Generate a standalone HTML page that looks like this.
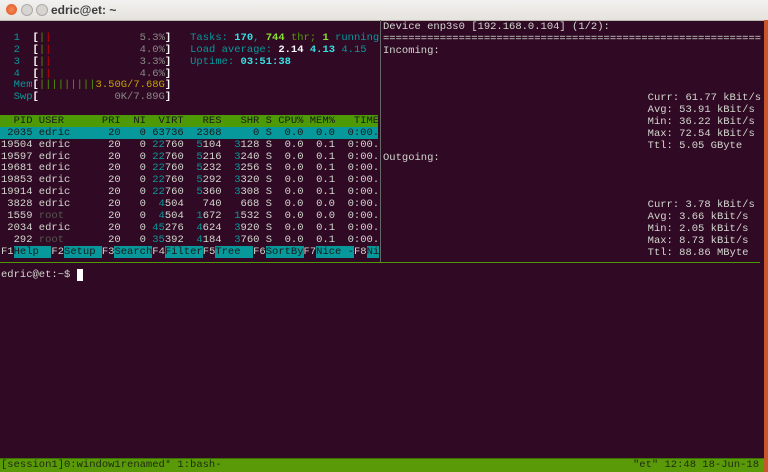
<!DOCTYPE html>
<html><head><meta charset="utf-8"><style>
*{margin:0;padding:0}
body{width:768px;height:472px;overflow:hidden;background:#300a24;position:relative;font-family:"Liberation Mono",monospace;font-size:10.5px;color:#d3d7cf}
.tb{position:absolute;left:0;top:0;width:768px;height:20px;background:linear-gradient(#f2f1ef,#e6e3de);border-bottom:1px solid #bdb8b0}
.tb .t{position:absolute;left:51px;top:3px;font-family:"Liberation Sans",sans-serif;font-weight:bold;font-size:12px;color:#3c3c3c}
.c{position:absolute;top:4px;width:11px;height:11px;border-radius:50%}
.l{position:absolute;white-space:pre;height:12px;line-height:12px}
.g{color:#888a85}.w{color:#fff;font-weight:bold}.tl{color:#06989a}.cy{color:#34e2e2;font-weight:bold}
.gr{color:#4e9a06}.grb{color:#8ae234;font-weight:bold}.r{color:#cc0000}.y{color:#c4a000}.dk{color:#555753}
.fk{background:#06989a;color:#1a1a1a}
</style></head><body>
<div class="tb"><div class="c" style="left:6px;background:radial-gradient(#f58a5a,#e0531f)"></div><div class="c" style="left:21px;background:#d8d5d0;border:1px solid #aaa;width:10px;height:10px"></div><div class="c" style="left:36px;background:#d8d5d0;border:1px solid #aaa;width:10px;height:10px"></div><div class="t">edric@et: ~</div></div>
<div style="position:absolute;left:764px;top:20px;width:4px;height:452px;background:#c9572e"></div>
<div style="position:absolute;left:380px;top:20px;width:1px;height:243px;background:#666"></div>
<div style="position:absolute;left:0;top:262px;width:760px;height:1px;background:#4e9a06"></div>
<div style="position:absolute;left:0;top:20px;width:381px;height:243px">
<div class="l" style="left:1px;top:12px">  <span class="tl">1</span>  <span class="w">[</span><span class="gr">|</span><span class="r">|</span><span class="g">              5.3%</span><span class="w">]</span>   <span class="tl">Tasks: </span><span class="cy">170</span><span class="tl">, </span><span class="grb">744</span><span class="gr"> thr; </span><span class="grb">1</span><span class="tl"> running</span></div>
<div class="l" style="left:1px;top:24px">  <span class="tl">2</span>  <span class="w">[</span><span class="gr">|</span><span class="r">|</span><span class="g">              4.0%</span><span class="w">]</span>   <span class="tl">Load average: </span><span class="w">2.14 </span><span class="cy">4.13 </span><span class="tl">4.15</span></div>
<div class="l" style="left:1px;top:35.5px">  <span class="tl">3</span>  <span class="w">[</span><span class="gr">|</span><span class="r">|</span><span class="g">              3.3%</span><span class="w">]</span>   <span class="tl">Uptime: </span><span class="cy">03:51:38</span></div>
<div class="l" style="left:1px;top:47.5px">  <span class="tl">4</span>  <span class="w">[</span><span class="gr">|</span><span class="r">|</span><span class="g">              4.6%</span><span class="w">]</span></div>
<div class="l" style="left:1px;top:59.3px">  <span class="tl">Mem</span><span class="w">[</span><span class="gr">|||||||||</span><span class="y">3.50G/7.68G</span><span class="w">]</span></div>
<div class="l" style="left:1px;top:71.2px">  <span class="tl">Swp</span><span class="w">[</span><span class="g">            0K/7.89G</span><span class="w">]</span></div>
<div class="l" style="left:0;top:95px;width:377px;padding-left:1px;background:#4e9a06;color:#1a1a1a">  PID USER      PRI  NI  VIRT   RES   SHR S CPU% MEM%   TIME</div>
<div class="l" style="left:0;top:106.8px;width:377px;padding-left:1px;background:#06989a;color:#1a1a1a"> 2035 edric      20   0 63736  2368     0 S  0.0  0.0  0:00.</div>
<div class="l" style="left:1px;top:118.7px">19504 edric      20   0 <span class="tl">22</span>760  <span class="tl">5</span>104  <span class="tl">3</span>128 S  0.0  0.1  0:00.</div>
<div class="l" style="left:1px;top:130.6px">19597 edric      20   0 <span class="tl">22</span>760  <span class="tl">5</span>216  <span class="tl">3</span>240 S  0.0  0.1  0:00.</div>
<div class="l" style="left:1px;top:142.4px">19681 edric      20   0 <span class="tl">22</span>760  <span class="tl">5</span>232  <span class="tl">3</span>256 S  0.0  0.1  0:00.</div>
<div class="l" style="left:1px;top:154.3px">19853 edric      20   0 <span class="tl">22</span>760  <span class="tl">5</span>292  <span class="tl">3</span>320 S  0.0  0.1  0:00.</div>
<div class="l" style="left:1px;top:166.2px">19914 edric      20   0 <span class="tl">22</span>760  <span class="tl">5</span>360  <span class="tl">3</span>308 S  0.0  0.1  0:00.</div>
<div class="l" style="left:1px;top:178px"> 3828 edric      20   0  <span class="tl">4</span>504   740   668 S  0.0  0.0  0:00.</div>
<div class="l" style="left:1px;top:189.9px"> 1559 <span class="dk">root </span>      20   0  <span class="tl">4</span>504  <span class="tl">1</span>672  <span class="tl">1</span>532 S  0.0  0.0  0:00.</div>
<div class="l" style="left:1px;top:201.8px"> 2034 edric      20   0 <span class="tl">45</span>276  <span class="tl">4</span>624  <span class="tl">3</span>920 S  0.0  0.1  0:00.</div>
<div class="l" style="left:1px;top:213.7px">  292 <span class="dk">root </span>      20   0 <span class="tl">35</span>392  <span class="tl">4</span>184  <span class="tl">3</span>760 S  0.0  0.1  0:00.</div>
<div class="l" style="left:1px;top:225.5px">F1<span class="fk">Help  </span>F2<span class="fk">Setup </span>F3<span class="fk">Search</span>F4<span class="fk">Filter</span>F5<span class="fk">Tree  </span>F6<span class="fk">SortBy</span>F7<span class="fk">Nice -</span>F8<span class="fk">Ni</span></div>
</div>
<div style="position:absolute;left:383px;top:20px;width:380px;height:243px">
<div class="l" style="left:0;top:1px">Device enp3s0 [192.168.0.104] (1/2):</div>
<div class="l" style="left:0;top:12.9px">============================================================</div>
<div class="l" style="left:0;top:24.7px">Incoming:</div>
<div class="l" style="left:0;top:72.2px">                                          Curr: 61.77 kBit/s</div>
<div class="l" style="left:0;top:84.1px">                                          Avg: 53.91 kBit/s</div>
<div class="l" style="left:0;top:96px">                                          Min: 36.22 kBit/s</div>
<div class="l" style="left:0;top:107.8px">                                          Max: 72.54 kBit/s</div>
<div class="l" style="left:0;top:119.7px">                                          Ttl: 5.05 GByte</div>
<div class="l" style="left:0;top:131.6px">Outgoing:</div>
<div class="l" style="left:0;top:179px">                                          Curr: 3.78 kBit/s</div>
<div class="l" style="left:0;top:190.9px">                                          Avg: 3.66 kBit/s</div>
<div class="l" style="left:0;top:202.8px">                                          Min: 2.05 kBit/s</div>
<div class="l" style="left:0;top:214.7px">                                          Max: 8.73 kBit/s</div>
<div class="l" style="left:0;top:226.5px">                                          Ttl: 88.86 MByte</div>
</div>
<div class="l" style="left:1px;top:269px">edric@et:~$ <span style="background:#fff"> </span></div>
<div style="position:absolute;left:0;top:458px;width:764px;height:13px;background:#5a9a08;border-top:1px solid #3f6e05"></div>
<div class="l" style="left:1px;top:459px;color:#1e2a10">[session1]0:window1renamed* 1:bash-</div>
<div class="l" style="left:633px;top:459px;color:#1e2a10">"et" 12:48 18-Jun-18</div>
</body></html>
